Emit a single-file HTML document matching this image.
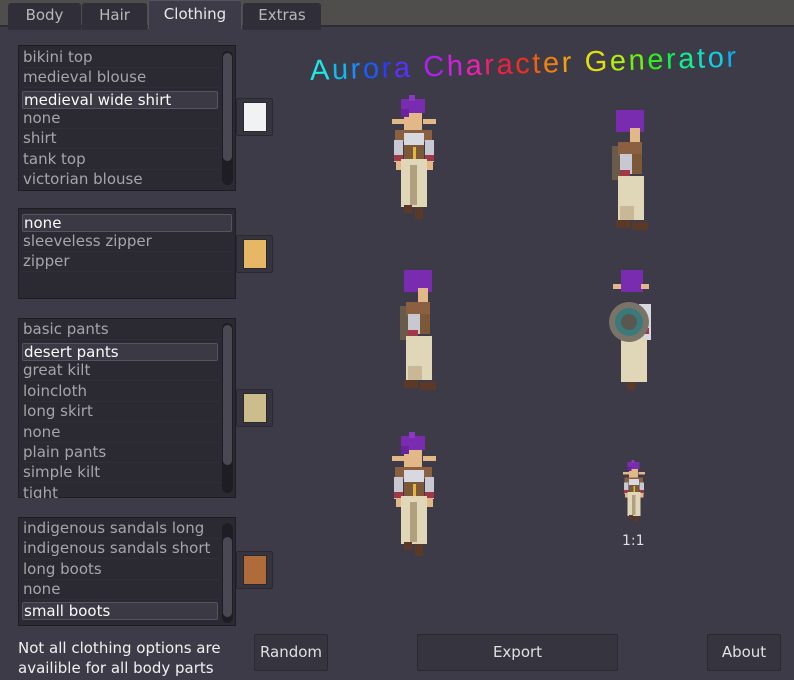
<!DOCTYPE html>
<html><head><meta charset="utf-8"><style>
*{margin:0;padding:0;box-sizing:border-box}
body{width:794px;height:680px;background:#3d3b47;font-family:"DejaVu Sans","Liberation Sans",sans-serif;position:relative;overflow:hidden}
.topbar{position:absolute;left:0;top:0;width:794px;height:27px;background:#4f4e4d;border-bottom:2px solid #2e2d33}
.tab{position:absolute;top:3px;height:27px;background:#302e38;color:#b8b8b8;font-size:15px;text-align:center;line-height:24px;border-radius:3px 3px 0 0}
.tab.act{top:0;background:#3d3b47;color:#e8e8e8;line-height:26px;height:29px;border:1px solid #55535e;border-bottom:none}
.list{position:absolute;left:18px;width:218px;background:#2b2a33;border:1px solid #1e1d24}
.row{position:absolute;left:4px;height:20px;font-size:15px;color:#a5a5aa;line-height:19px;white-space:nowrap;width:196px;border-bottom:1px solid #302f38}
.row.sel{color:#fafafa;background:#3a3944;border:1px solid #555460;border-radius:2px;left:3px;padding-left:1px}
.sb{position:absolute;right:2px;width:11px;background:#1e1d24;border-radius:6px}
.sb i{position:absolute;left:1px;right:1px;background:#4a4953;border-radius:5px}
.sw{position:absolute;left:236px;width:37px;height:38px;background:#36343f;border:1px solid #2a2930;border-radius:2px}
.sw i{position:absolute;left:6px;top:3px;width:24px;height:30px;border:1px solid #2a2930}
.btn{position:absolute;top:634px;height:37px;background:#36343f;border:1px solid #2a2930;border-radius:2px;color:#e0e0e0;font-size:15px;text-align:center;line-height:34px}
.note{position:absolute;left:18px;top:638px;color:#f0f0f0;font-size:15px;line-height:20px}
.title{position:absolute;left:310px;top:55px;font-family:"Liberation Sans",sans-serif;font-size:29px;transform:rotate(-1.8deg);transform-origin:left center;letter-spacing:2.6px;white-space:nowrap}
svg{position:absolute}
</style></head><body>
<div class="topbar"></div>
<div class="tab" style="left:8px;width:73px">Body</div>
<div class="tab" style="left:82px;width:65px">Hair</div>
<div class="tab act" style="left:148px;width:94px">Clothing</div>
<div class="tab" style="left:243px;width:78px">Extras</div>

<div class="list" style="top:45px;height:146px">
<div class="row" style="top:2px">bikini top</div>
<div class="row" style="top:22px">medieval blouse</div>
<div class="row sel" style="top:45px;width:196px;height:18px;line-height:16px">medieval wide shirt</div>
<div class="row" style="top:63px">none</div>
<div class="row" style="top:83px">shirt</div>
<div class="row" style="top:104px">tank top</div>
<div class="row" style="top:124px;border:none">victorian blouse</div>
<div class="sb" style="top:5px;height:134px"><i style="top:2px;height:108px"></i></div>
</div>
<div class="sw" style="top:98px"><i style="background:#f0f2f4"></i></div>

<div class="list" style="top:208px;height:91px">
<div class="row sel" style="top:5px;width:210px;height:18px;line-height:16px">none</div>
<div class="row" style="top:23px;width:210px">sleeveless zipper</div>
<div class="row" style="top:43px;width:210px">zipper</div>
</div>
<div class="sw" style="top:235px"><i style="background:#e6b865"></i></div>

<div class="list" style="top:318px;height:180px">
<div class="row" style="top:1px">basic pants</div>
<div class="row sel" style="top:24px;height:18px;line-height:16px">desert pants</div>
<div class="row" style="top:42px">great kilt</div>
<div class="row" style="top:63px">loincloth</div>
<div class="row" style="top:83px">long skirt</div>
<div class="row" style="top:104px">none</div>
<div class="row" style="top:124px">plain pants</div>
<div class="row" style="top:144px">simple kilt</div>
<div class="row" style="top:165px;height:14px;overflow:hidden;border:none">tight</div>
<div class="sb" style="top:4px;height:170px"><i style="top:2px;height:140px"></i></div>
</div>
<div class="sw" style="top:389px"><i style="background:#cdbd8c"></i></div>

<div class="list" style="top:517px;height:109px">
<div class="row" style="top:1px">indigenous sandals long</div>
<div class="row" style="top:21px">indigenous sandals short</div>
<div class="row" style="top:42px">long boots</div>
<div class="row" style="top:62px">none</div>
<div class="row sel" style="top:84px;height:18px;line-height:16px">small boots</div>
<div class="sb" style="top:5px;height:100px"><i style="top:14px;height:80px"></i></div>
</div>
<div class="sw" style="top:551px"><i style="background:#b06b3a"></i></div>

<div class="note">Not all clothing options are<br>availible for all body parts</div>
<div class="btn" style="left:254px;width:74px">Random</div>
<div class="btn" style="left:417px;width:201px">Export</div>
<div class="btn" style="left:707px;width:74px">About</div>

<div class="title"><span style="color:#1ee6e6">A</span><span style="color:#12b8f0">u</span><span style="color:#1a8cff">r</span><span style="color:#1a5cff">o</span><span style="color:#2a3cff">r</span><span style="color:#5a30ff">a</span> <span style="color:#b020f0">C</span><span style="color:#d020e0">h</span><span style="color:#f020b0">a</span><span style="color:#f02070">r</span><span style="color:#f02040">a</span><span style="color:#f03020">c</span><span style="color:#f06010">t</span><span style="color:#f08010">e</span><span style="color:#f0a010">r</span> <span style="color:#e0e010">G</span><span style="color:#b0f010">e</span><span style="color:#70f010">n</span><span style="color:#30f020">e</span><span style="color:#10f050">r</span><span style="color:#10f090">a</span><span style="color:#10e0c0">t</span><span style="color:#10d0e0">o</span><span style="color:#10b0f0">r</span></div>

<svg width="0" height="0"><defs>
<symbol id="front" viewBox="0 0 44 124">
<rect x="12" y="14" width="18" height="22" fill="#e2b888"/>
<rect x="0" y="24" width="12" height="5" fill="#e2b888"/><rect x="31" y="24" width="13" height="5" fill="#e2b888"/>
<rect x="9" y="4" width="24" height="14" fill="#7a2cb0"/><rect x="17" y="0" width="6" height="6" fill="#8a3ac0"/><rect x="9" y="14" width="8" height="8" fill="#6a22a0"/>
<rect x="3" y="35" width="37" height="12" fill="#8a6040"/>
<rect x="2" y="45" width="9" height="22" fill="#c8c8d2"/><rect x="33" y="45" width="9" height="22" fill="#c8c8d2"/>
<rect x="2" y="60" width="9" height="6" fill="#a03848"/><rect x="33" y="60" width="9" height="6" fill="#a03848"/>
<rect x="12" y="38" width="20" height="12" fill="#d8d8e0"/>
<rect x="12" y="50" width="20" height="16" fill="#7a5838"/>
<rect x="21" y="52" width="3" height="12" fill="#e0b840"/>
<rect x="4" y="66" width="7" height="9" fill="#e2b888"/><rect x="34" y="66" width="7" height="9" fill="#e2b888"/>
<rect x="9" y="64" width="26" height="48" fill="#e0d6b8"/><rect x="18" y="70" width="7" height="40" fill="#b0a080"/>
<rect x="12" y="110" width="8" height="8" fill="#5a3a26"/><rect x="23" y="112" width="8" height="12" fill="#5a3a26"/>
</symbol>
<symbol id="side" viewBox="0 0 44 124">
<rect x="8" y="4" width="28" height="22" fill="#7a2cb0"/><rect x="22" y="22" width="10" height="14" fill="#e2b888"/>
<rect x="4" y="40" width="8" height="34" fill="#6a5a4a"/>
<rect x="10" y="36" width="24" height="14" fill="#8a6040"/><rect x="12" y="48" width="14" height="20" fill="#c8c8d2"/><rect x="24" y="48" width="10" height="20" fill="#7a5838"/>
<rect x="12" y="64" width="10" height="8" fill="#a03848"/>
<rect x="10" y="70" width="26" height="44" fill="#e0d6b8"/><rect x="12" y="100" width="14" height="14" fill="#c8b896"/>
<rect x="8" y="114" width="14" height="8" fill="#5a3a26"/><rect x="24" y="116" width="16" height="8" fill="#5a3a26"/>
</symbol>
<symbol id="back" viewBox="0 0 44 124">
<rect x="12" y="2" width="22" height="22" fill="#7a2cb0"/><rect x="4" y="16" width="8" height="5" fill="#e2b888"/><rect x="32" y="16" width="8" height="5" fill="#e2b888"/>
<rect x="30" y="36" width="12" height="36" fill="#d8d8e0"/><rect x="30" y="60" width="10" height="6" fill="#a03848"/>
<rect x="12" y="70" width="26" height="44" fill="#e0d6b8"/><rect x="18" y="114" width="8" height="8" fill="#5a3a26"/>
<circle cx="20" cy="54" r="20" fill="#7a7468"/><circle cx="20" cy="54" r="14" fill="#3a7a7a"/><circle cx="20" cy="54" r="8" fill="#5a5650"/>
</symbol>
</defs></svg>
<svg style="left:392px;top:95px" width="44" height="124"><use href="#front"/></svg>
<svg style="left:608px;top:106px" width="44" height="124"><use href="#side"/></svg>
<svg style="left:396px;top:266px" width="44" height="124"><use href="#side"/></svg>
<svg style="left:609px;top:268px" width="44" height="124"><use href="#back"/></svg>
<svg style="left:392px;top:432px" width="44" height="124"><use href="#front"/></svg>
<svg style="left:623px;top:460px" width="22" height="62"><use href="#front"/></svg>
<div style="position:absolute;left:622px;top:533px;color:#e0e0e0;font-size:14px">1:1</div>
</body></html>
